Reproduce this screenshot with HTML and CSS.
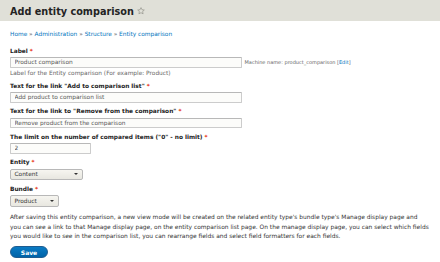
FILE: index.html
```html
<!DOCTYPE html>
<html>
<head>
<meta charset="utf-8">
<link rel="stylesheet" href="styles.css">
</head>
<body>
<header class="page-head">
  <h1 class="title">Add entity comparison <svg class="star" viewBox="0 0 16 16" width="8" height="8"><path d="M8 1.2l2 4.3 4.6.5-3.4 3.1 1 4.6L8 11.4 3.8 13.7l1-4.6L1.4 6l4.6-.5z" fill="none" stroke="#8e8e86" stroke-width="1.3" stroke-linejoin="round"/></svg></h1>
</header>
<main class="content">
  <nav class="breadcrumb"><a href="#">Home</a> » <a href="#">Administration</a> » <a href="#">Structure</a> » <a href="#">Entity comparison</a></nav>
  <form class="form">
    <div class="item">
      <label class="lbl">Label <span class="req">*</span></label>
      <div class="row"><input class="text wide" value="Product comparison"><span class="machine">Machine name: product_comparison [<a href="#">Edit</a>]</span></div>
      <div class="desc">Label for the Entity comparison (For example: Product)</div>
    </div>
    <div class="item">
      <label class="lbl">Text for the link "Add to comparison list" <span class="req">*</span></label>
      <input class="text wide" value="Add product to comparison list">
    </div>
    <div class="item">
      <label class="lbl">Text for the link to "Remove from the comparison" <span class="req">*</span></label>
      <input class="text wide" value="Remove product from the comparison">
    </div>
    <div class="item">
      <label class="lbl">The limit on the number of compared items ("0" - no limit) <span class="req">*</span></label>
      <input class="text small" value="2">
    </div>
    <div class="item">
      <label class="lbl">Entity <span class="req">*</span></label>
      <div class="select sel-entity"><span>Content</span><i class="arrow"></i></div>
    </div>
    <div class="item">
      <label class="lbl">Bundle <span class="req">*</span></label>
      <div class="select sel-bundle"><span>Product</span><i class="arrow"></i></div>
    </div>
    <p class="info">After saving this entity comparison, a new view mode will be created on the related entity type's bundle type's Manage display page and you can see a link to that Manage display page, on the entity comparison list page. On the manage display page, you can select which fields you would like to see in the comparison list, you can rearrange fields and select field formatters for each fields.</p>
    <button type="button" class="btn">Save</button>
  </form>
</main>
</body>
</html>
```
FILE: styles.css
```css
html, body {
  margin: 0;
  padding: 0;
  background: #fff;
}
body {
  font-family: "DejaVu Sans", Verdana, sans-serif;
  color: #333;
  font-size: 5.85px;
}
.page-head {
  background: #e0e0d8;
  height: 21px;
  padding-left: 10px;
  box-sizing: border-box;
}
.title {
  margin: 0;
  font-size: 9.7px;
  line-height: 24px;
  font-weight: bold;
  color: #232323;
}
.star {
  vertical-align: 0px;
}
.content {
  padding: 0 10.5px 0 10px;
}
.breadcrumb {
  margin-top: 10px;
  line-height: 7px;
  color: #666;
}
.breadcrumb a, .machine a {
  color: #0074bd;
  text-decoration: none;
}
.form {
  margin-top: 9.5px;
}
.item {
  margin-bottom: 5.5px;
}
.lbl {
  display: block;
  font-weight: bold;
  color: #222;
  line-height: 7px;
  margin-bottom: 2.5px;
}
.req {
  color: #e62600;
}
.row {
  display: flex;
  align-items: center;
  gap: 3px;
}
.text {
  display: block;
  box-sizing: border-box;
  height: 10.5px;
  border: 1px solid #ccc;
  border-top-color: #b8b8b8;
  border-radius: 1px;
  background: #fcfcfa;
  font-family: inherit;
  font-size: 5.85px;
  color: #555;
  padding: 0 3.5px;
  margin: 0;
  outline: none;
}
.wide { width: 231.5px; }
.small { width: 81px; }
.machine {
  color: #666;
  font-size: 5px;
}
.desc {
  margin-top: 2.5px;
  line-height: 7px;
  color: #666;
}
.select {
  box-sizing: border-box;
  height: 11.5px;
  border: 1px solid #b8b8b8;
  border-radius: 2px;
  background: linear-gradient(#f6f5f0, #e8e7e0);
  display: flex;
  align-items: center;
  justify-content: space-between;
  padding: 0 4px 0 3.5px;
  color: #333;
}
.sel-entity { width: 73px; }
.sel-bundle { width: 49px; }
.arrow {
  width: 0;
  height: 0;
  border-left: 2px solid transparent;
  border-right: 2px solid transparent;
  border-top: 2.5px solid #333;
}
.info {
  margin: 4px 0 0;
  line-height: 9.5px;
  color: #333;
  font-size: 5.93px;
}
.btn {
  margin-top: 5.5px;
  width: 38px;
  height: 12px;
  border: 1px solid #1e5c90;
  border-radius: 6px;
  background: linear-gradient(#0a7bc4, #0063a8);
  color: #fff;
  font-family: inherit;
  font-weight: bold;
  font-size: 6px;
  padding: 0;
}
```
